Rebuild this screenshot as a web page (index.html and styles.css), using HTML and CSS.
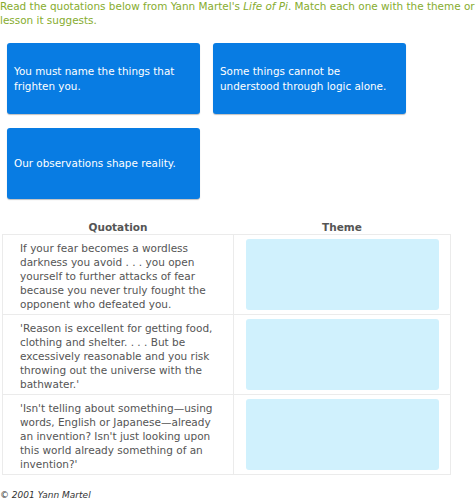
FILE: index.html
```html
<!DOCTYPE html>
<html>
<head>
<meta charset="utf-8">
<link rel="stylesheet" href="styles.css">
</head>
<body>
<p class="intro">Read the quotations below from Yann Martel's <i>Life of Pi</i>. Match each one with the theme or lesson it suggests.</p>
<div class="cards">
  <div class="card">You must name the things that frighten you.</div>
  <div class="card">Some things cannot be understood through logic alone.</div>
  <div class="card">Our observations shape reality.</div>
</div>
<table class="match">
  <thead>
    <tr><th class="qh">Quotation</th><th class="th">Theme</th></tr>
  </thead>
  <tbody>
    <tr>
      <td class="quote">If your fear becomes a wordless darkness you avoid . . . you open yourself to further attacks of fear because you never truly fought the opponent who defeated you.</td>
      <td class="slot"><div class="drop"></div></td>
    </tr>
    <tr>
      <td class="quote">'Reason is excellent for getting food, clothing and shelter. . . . But be excessively reasonable and you risk throwing out the universe with the bathwater.'</td>
      <td class="slot"><div class="drop"></div></td>
    </tr>
    <tr>
      <td class="quote">'Isn't telling about something—using words, English or Japanese—already an invention? Isn't just looking upon this world already something of an invention?'</td>
      <td class="slot"><div class="drop"></div></td>
    </tr>
  </tbody>
</table>
<p class="credit">© 2001 Yann Martel</p>
</body>
</html>
```
FILE: styles.css
```css
html, body {
  margin: 0;
  padding: 0;
  background: #fff;
}
body {
  font-family: "DejaVu Sans", Verdana, sans-serif;
  font-size: 10.5px;
  color: #555;
}
.intro {
  margin: 0;
  font-size: 10.45px;
  color: #86ac2e;
  line-height: 13.5px;
}
.cards {
  display: grid;
  grid-template-columns: 193px 193px;
  grid-auto-rows: 71px;
  column-gap: 13px;
  row-gap: 14px;
  padding: 16px 0 0 7px;
}
.card {
  background: #087ce3;
  color: #fff;
  border-radius: 3px;
  box-shadow: 0 1px 1px rgba(0,0,0,0.25);
  display: flex;
  align-items: center;
  padding: 0 7px;
  line-height: 14.5px;
  font-size: 10.4px;
}
.match {
  border-collapse: collapse;
  margin: 21px 0 0 2px;
  width: 448px;
  table-layout: fixed;
}
.match th {
  font-size: 10.5px;
  font-weight: bold;
  color: #555;
  padding: 0;
  height: 14px;
  line-height: 14px;
}
.qh { width: 231px; }
.th { width: 217px; }
.match td {
  border: 1px solid #ebebeb;
  vertical-align: middle;
}
.quote {
  padding: 2px 14px 0 17px;
  line-height: 14px;
  font-size: 10.5px;
  color: #555;
}
.slot {
  padding: 4px 11px 4px 12px;
}
.drop {
  height: 71px;
  background: #d0f1fd;
  border-radius: 3px;
}
.credit {
  margin: 15px 0 0;
  font-size: 9px;
  font-style: italic;
  color: #333;
}
```
